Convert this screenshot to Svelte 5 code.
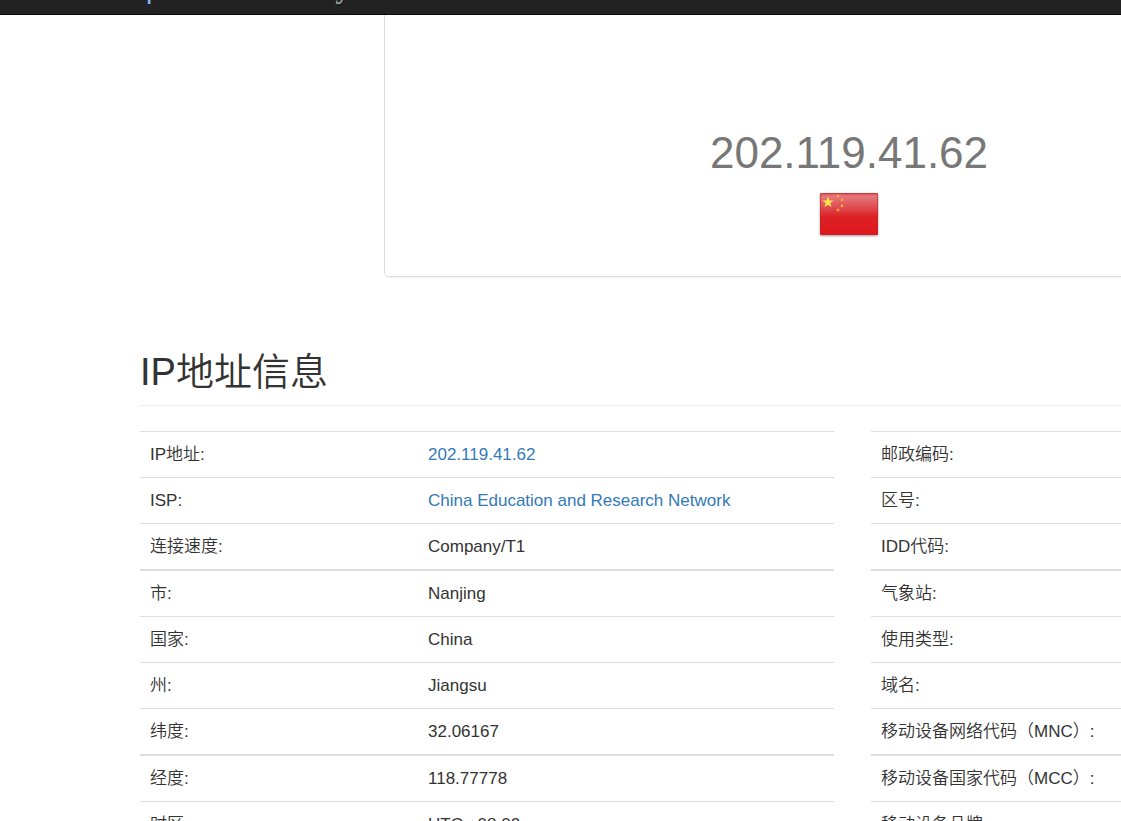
<script lang="ts">
  type Row = { label: string; value?: string; link?: boolean };

  const ip = "202.119.41.62";

  const network: Row[] = [
    { label: "IP地址:", value: ip, link: true },
    { label: "ISP:", value: "China Education and Research Network", link: true },
    { label: "连接速度:", value: "Company/T1" },
    { label: "市:", value: "Nanjing" },
    { label: "国家:", value: "China" },
    { label: "州:", value: "Jiangsu" },
    { label: "纬度:", value: "32.06167" },
    { label: "经度:", value: "118.77778" },
    { label: "时区:", value: "UTC +08:00" },
  ];

  const device: Row[] = [
    { label: "邮政编码:" },
    { label: "区号:" },
    { label: "IDD代码:" },
    { label: "气象站:" },
    { label: "使用类型:" },
    { label: "域名:" },
    { label: "移动设备网络代码（MNC）:" },
    { label: "移动设备国家代码（MCC）:" },
    { label: "移动设备品牌:" },
  ];
</script>

{#snippet infoTable(rows: Row[])}
  <table class="info">
    <tbody>
      {#each rows as row (row.label)}
        <tr>
          <th scope="row">{row.label}</th>
          <td>
            {#if row.link}
              <a href="#top">{row.value}</a>
            {:else}
              {row.value ?? ""}
            {/if}
          </td>
        </tr>
      {/each}
    </tbody>
  </table>
{/snippet}

<div class="viewport" id="top">
  <div class="page">
    <nav class="navbar">
      <a class="brand" href="#top">p</a>
      <a class="brand tail" href="#top">y</a>
    </nav>

    <main class="container">
      <section class="panel">
        <p class="address">{ip}</p>
        <svg class="flag" viewBox="0 0 60 44" role="img" aria-label="China">
          <defs>
            <linearGradient id="red" x1="0" y1="0" x2="0" y2="1">
              <stop offset="0" stop-color="#dc4a4e" />
              <stop offset="0.08" stop-color="#e5787b" />
              <stop offset="0.3" stop-color="#e05357" />
              <stop offset="0.56" stop-color="#dc2227" />
              <stop offset="1" stop-color="#de161b" />
            </linearGradient>
          </defs>
          <rect x="1" y="1" width="58" height="42" rx="1" fill="url(#red)" />
          <rect x="1.5" y="1.5" width="57" height="41" rx="1" fill="none" stroke="#c4262a" stroke-opacity="0.6" />
          <path d="M9 4.500l1.500 4h4.200l-3.400 2.600 1.300 4.200L9 12.800l-3.600 2.500 1.300-4.200-3.400-2.600h4.200z" fill="#ffe34d" />
          <g fill="#f3a83a">
            <circle cx="19" cy="4" r="1.400" />
            <circle cx="23" cy="8" r="1.400" />
            <circle cx="23" cy="14" r="1.400" />
            <circle cx="19" cy="18" r="1.400" />
          </g>
        </svg>
      </section>

      <h1>IP地址信息</h1>

      <div class="columns">
        {@render infoTable(network)}
        {@render infoTable(device)}
      </div>
    </main>
  </div>
</div>

<style>
  :global(body) {
    margin: 0;
    background: #fff;
  }

  .viewport {
    height: 100vh;
    overflow: hidden;
    font-family: "Liberation Sans", Arial, "Noto Sans CJK SC", sans-serif;
    font-size: 17px;
    font-weight: 350;
    line-height: 25px;
    color: #333;
  }

  .page {
    min-width: 1705px;
  }

  .navbar {
    display: flex;
    align-items: flex-end;
    box-sizing: border-box;
    height: 15px;
    padding: 0 146px 11px;
    overflow: hidden;
    background: #222;
    border-bottom: 1px solid #080808;
  }

  .brand {
    color: #8fb4ee;
    font-size: 28px;
    line-height: 28px;
    text-decoration: none;
  }

  .tail {
    margin-left: 174px;
    color: #9aa8a8;
    font-family: "Liberation Serif", serif;
    font-weight: 700;
  }

  .container {
    max-width: 1425px;
    margin: 0 auto;
  }

  .panel {
    display: flex;
    flex-direction: column;
    align-items: center;
    box-sizing: border-box;
    max-width: 937px;
    margin: 0 auto;
    padding: 107px 27px 40px 20px;
    border: 1px solid #ddd;
    border-top: 0;
    border-radius: 0 0 5px 5px;
    box-shadow: 0 1px 1px rgba(0, 0, 0, 0.05);
  }

  .address {
    margin: 0;
    color: #777;
    font-size: 44px;
    line-height: 62px;
  }

  .flag {
    width: 60px;
    height: 44px;
    margin-top: 8px;
    filter: drop-shadow(0 1px 1px rgba(0, 0, 0, 0.4));
  }

  h1 {
    margin: 72px 0 25px;
    padding-bottom: 10px;
    border-bottom: 1px solid #eee;
    font-size: 38px;
    font-weight: 350;
    line-height: 46px;
  }

  .columns {
    display: grid;
    grid-template-columns: 1fr 1fr;
    gap: 37px;
  }

  .info {
    width: 100%;
    table-layout: fixed;
    border-collapse: separate;
    border-spacing: 0;
  }

  .info th,
  .info td {
    height: 25px;
    padding: 10px;
    border-top: 1px solid #ddd;
    font-weight: 350;
    text-align: left;
    vertical-align: top;
    white-space: nowrap;
  }

  .info th {
    width: 258px;
  }

  /* every fourth rule is heavier */
  .info tr:nth-child(4n) > * {
    border-top-width: 2px;
  }

  .info a {
    color: #337ab7;
    text-decoration: none;
  }
</style>
